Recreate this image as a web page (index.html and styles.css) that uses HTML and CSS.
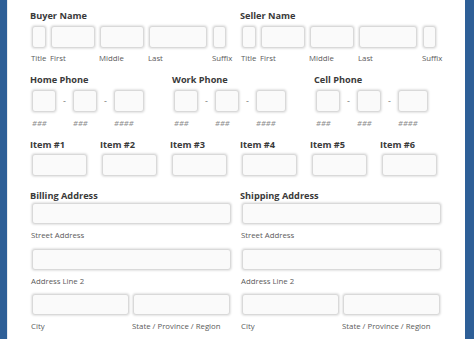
FILE: index.html
```html
<!DOCTYPE html>
<html>
<head>
<meta charset="utf-8">
<link rel="stylesheet" href="styles.css">
</head>
<body>
<div class="sheet">
  <div class="row two names">
    <div class="field">
      <div class="label">Buyer Name</div>
      <div class="name-grid">
        <div class="cell"><div class="input"></div><span class="sub">Title</span></div>
        <div class="cell"><div class="input"></div><span class="sub">First</span></div>
        <div class="cell"><div class="input"></div><span class="sub">Middle</span></div>
        <div class="cell"><div class="input"></div><span class="sub">Last</span></div>
        <div class="cell"><div class="input"></div><span class="sub">Suffix</span></div>
      </div>
    </div>
    <div class="field">
      <div class="label">Seller Name</div>
      <div class="name-grid">
        <div class="cell"><div class="input"></div><span class="sub">Title</span></div>
        <div class="cell"><div class="input"></div><span class="sub">First</span></div>
        <div class="cell"><div class="input"></div><span class="sub">Middle</span></div>
        <div class="cell"><div class="input"></div><span class="sub">Last</span></div>
        <div class="cell"><div class="input"></div><span class="sub">Suffix</span></div>
      </div>
    </div>
  </div>

  <div class="row phones">
    <div class="field">
      <div class="label">Home Phone</div>
      <div class="phone">
        <div class="pcell p3"><div class="input"></div><span class="hash">###</span></div>
        <span class="dash">-</span>
        <div class="pcell p3"><div class="input"></div><span class="hash">###</span></div>
        <span class="dash">-</span>
        <div class="pcell p4"><div class="input"></div><span class="hash">####</span></div>
      </div>
    </div>
    <div class="field">
      <div class="label">Work Phone</div>
      <div class="phone">
        <div class="pcell p3"><div class="input"></div><span class="hash">###</span></div>
        <span class="dash">-</span>
        <div class="pcell p3"><div class="input"></div><span class="hash">###</span></div>
        <span class="dash">-</span>
        <div class="pcell p4"><div class="input"></div><span class="hash">####</span></div>
      </div>
    </div>
    <div class="field">
      <div class="label">Cell Phone</div>
      <div class="phone">
        <div class="pcell p3"><div class="input"></div><span class="hash">###</span></div>
        <span class="dash">-</span>
        <div class="pcell p3"><div class="input"></div><span class="hash">###</span></div>
        <span class="dash">-</span>
        <div class="pcell p4"><div class="input"></div><span class="hash">####</span></div>
      </div>
    </div>
  </div>

  <div class="row items">
    <div class="field"><div class="label">Item #1</div><div class="input item"></div></div>
    <div class="field"><div class="label">Item #2</div><div class="input item"></div></div>
    <div class="field"><div class="label">Item #3</div><div class="input item"></div></div>
    <div class="field"><div class="label">Item #4</div><div class="input item"></div></div>
    <div class="field"><div class="label">Item #5</div><div class="input item"></div></div>
    <div class="field"><div class="label">Item #6</div><div class="input item"></div></div>
  </div>

  <div class="row two address">
    <div class="field">
      <div class="label">Billing Address</div>
      <div class="input addr"></div>
      <div class="sub block">Street Address</div>
      <div class="input addr gap"></div>
      <div class="sub block">Address Line 2</div>
      <div class="city-grid">
        <div><div class="input addr"></div><div class="sub block">City</div></div>
        <div><div class="input addr"></div><div class="sub block">State / Province / Region</div></div>
      </div>
    </div>
    <div class="field">
      <div class="label">Shipping Address</div>
      <div class="input addr"></div>
      <div class="sub block">Street Address</div>
      <div class="input addr gap"></div>
      <div class="sub block">Address Line 2</div>
      <div class="city-grid">
        <div><div class="input addr"></div><div class="sub block">City</div></div>
        <div><div class="input addr"></div><div class="sub block">State / Province / Region</div></div>
      </div>
    </div>
  </div>
</div>
</body>
</html>
```

FILE: styles.css
```css
html, body {
  margin: 0;
  padding: 0;
}
body {
  background: #2e5f97;
  width: 474px;
  height: 339px;
  overflow: hidden;
  font-family: "Open Sans", "DejaVu Sans", sans-serif;
}
.sheet {
  margin: 0 9px 0 7px;
  height: 339px;
  background: #ffffff;
  padding: 9px 0 0 23px;
  box-sizing: border-box;
  box-shadow: inset 1px 0 0 #e8ecf2;
}
.label {
  font-size: 9.2px;
  font-weight: 700;
  line-height: 14px;
  color: #3a3a3a;
  white-space: nowrap;
}
.input {
  box-sizing: border-box;
  height: 22px;
  background: #fafafa;
  border: 1px solid #d9d9d9;
  border-radius: 3px;
  box-shadow: 0 0 2px 1px #e4e4e4;
}
.sub {
  font-size: 7.8px;
  line-height: 12px;
  color: #5a5a5a;
  white-space: nowrap;
}
.row.two {
  display: grid;
  grid-template-columns: 210px 210px;
}
.names .input { margin: 3px 0 4px 2px; }
.name-grid {
  display: grid;
  grid-template-columns: 16px 46px 46px 60px 16px;
  column-gap: 3px;
}
.name-grid .cell:last-child { margin-left: 1px; }
.name-grid .sub { display: block; margin-left: 1px; }

.phones {
  margin-top: 9px;
  display: grid;
  grid-template-columns: 142px 142px 142px;
}
.phone {
  display: flex;
  align-items: flex-start;
  margin: 3px 0 0 2px;
}
.pcell .input { width: 100%; }
.p3 { width: 24px; }
.p4 { width: 30px; }
.dash {
  width: 17px;
  height: 22px;
  line-height: 22px;
  text-align: center;
  font-size: 9px;
  color: #777777;
}
.hash {
  display: block;
  margin-top: 5px;
  font-size: 7.6px;
  line-height: 12px;
  font-style: italic;
  color: #8a8a8a;
  white-space: nowrap;
}

.items {
  margin-top: 9px;
  display: grid;
  grid-template-columns: repeat(6, 70px);
}
.input.item {
  width: 55px;
  margin: 2px 0 0 2px;
}

.address { margin-top: 13px; }
.input.addr {
  height: 21px;
  margin-left: 2px;
  width: 199px;
}
.address .field > .input.addr:first-of-type { margin-top: 3px; }
.sub.block {
  display: block;
  margin: 5px 0 0 1px;
}
.input.addr.gap { margin-top: 8px; }
.city-grid {
  margin-top: 7px;
  margin-left: 2px;
  width: 199px;
  display: grid;
  grid-template-columns: 97px 97px;
  column-gap: 4px;
}
.city-grid .input.addr {
  width: 100%;
  margin-left: 0;
}
.city-grid .sub.block { margin-left: -1px; }
```
